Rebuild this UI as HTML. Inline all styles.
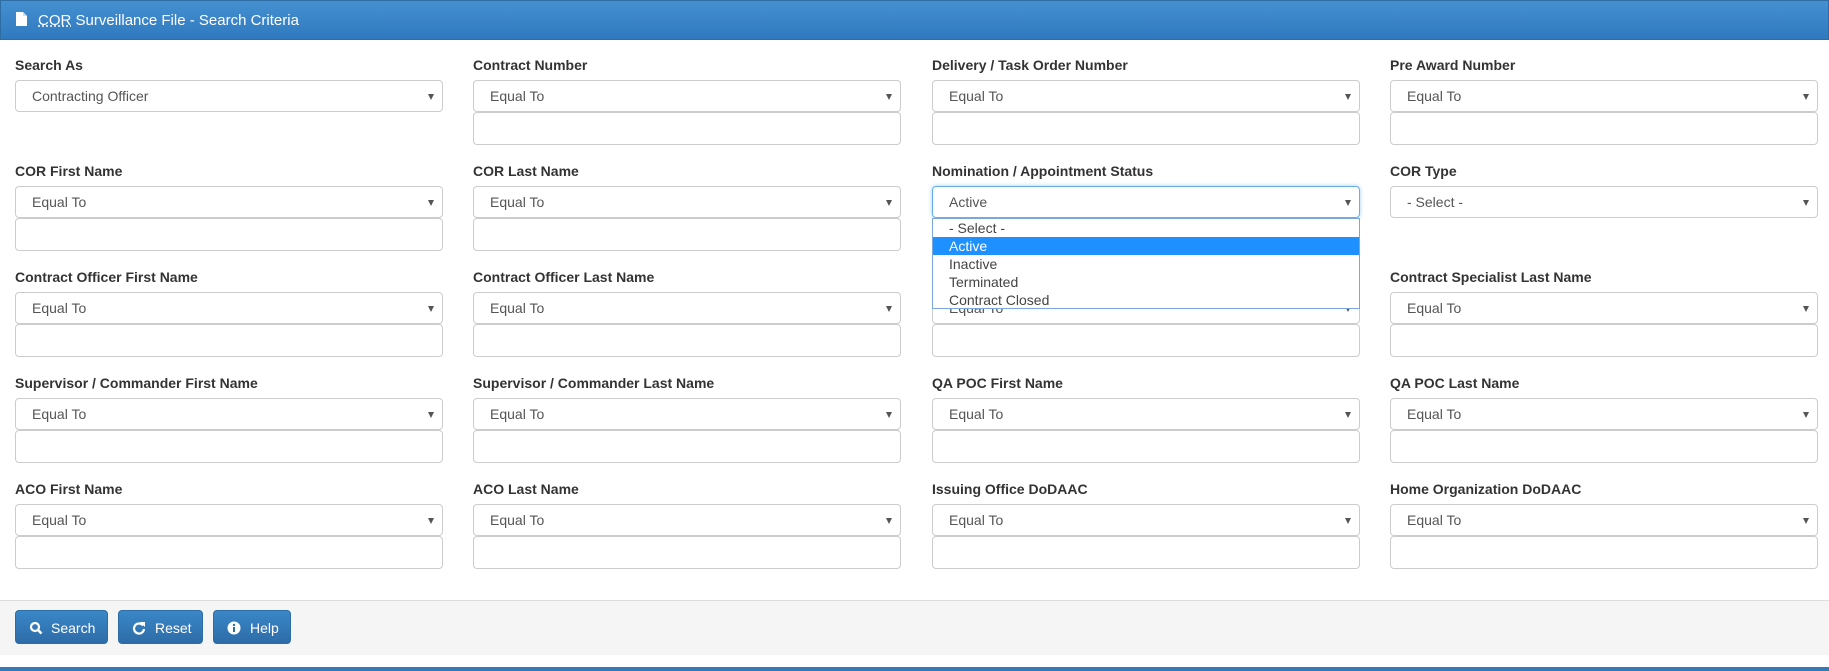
<!DOCTYPE html>
<html><head><style>
*{box-sizing:border-box}
body{margin:0;width:1829px;height:671px;background:#fff;font-family:"Liberation Sans",Arial,sans-serif;position:relative;overflow:hidden}
.hdr{position:absolute;left:0;top:0;width:1829px;height:40px;background:linear-gradient(#4490d0,#3079bf);border:1px solid #2e6da4;color:#fff;font-size:15px}
.hdr span{position:absolute;left:37px;top:11px}
.hdr u{text-decoration:underline dotted}
.lbl{position:absolute;font-weight:bold;font-size:14px;color:#333}
.sel{position:absolute;height:32px;border:1px solid #ccc;border-radius:4px;font-size:14px;color:#555;padding:7px 16px;background:#fff}
.sel:after{content:"";position:absolute;right:8px;top:13px;border-left:3.5px solid transparent;border-right:3.5px solid transparent;border-top:6px solid #555}
.inp{position:absolute;height:33px;border:1px solid #ccc;border-radius:4px;background:#fff}
.foot{position:absolute;left:0;top:600px;width:1829px;height:55px;background:#f5f5f5;border-top:1px solid #ddd}
.btn{position:absolute;top:610px;height:34px;background:linear-gradient(#3a87c8,#2d6ca8);border:1px solid #2e6da4;border-radius:4px;color:#fff;font-size:14px;padding:9px 0 0 0}
.btn svg{position:absolute;left:13px;top:10px}
.btn span{position:absolute;top:9px}
.dd{position:absolute;left:932px;top:218px;width:428px;height:91px;background:#fff;border:1px solid #7aa7e0;font-size:14px;color:#444;z-index:5}
.dd div{height:18px;line-height:18px;padding-left:16px}
.dd .on{background:#1e90ff;color:#fff}
</style></head><body>
<div class="hdr"><svg style="position:absolute;left:15px;top:11px" width="11" height="14" viewBox="0 0 11 14"><path d="M0 0H7L11 4V14H0Z" fill="#fff"/><path d="M7 0V4H11" fill="#cfe0f0"/></svg><span><u>COR</u> Surveillance File - Search Criteria</span></div>

<div class="lbl" style="left:15px;top:57px">Search As</div>
<div class="sel" style="left:15px;top:80px;width:428px">Contracting Officer</div>

<div class="lbl" style="left:473px;top:57px">Contract Number</div>
<div class="sel" style="left:473px;top:80px;width:428px">Equal To</div><div class="inp" style="left:473px;top:112px;width:428px"></div>
<div class="lbl" style="left:932px;top:57px">Delivery / Task Order Number</div>
<div class="sel" style="left:932px;top:80px;width:428px">Equal To</div><div class="inp" style="left:932px;top:112px;width:428px"></div>
<div class="lbl" style="left:1390px;top:57px">Pre Award Number</div>
<div class="sel" style="left:1390px;top:80px;width:428px">Equal To</div><div class="inp" style="left:1390px;top:112px;width:428px"></div>

<div class="lbl" style="left:15px;top:163px">COR First Name</div>
<div class="sel" style="left:15px;top:186px;width:428px">Equal To</div><div class="inp" style="left:15px;top:218px;width:428px"></div>
<div class="lbl" style="left:473px;top:163px">COR Last Name</div>
<div class="sel" style="left:473px;top:186px;width:428px">Equal To</div><div class="inp" style="left:473px;top:218px;width:428px"></div>
<div class="lbl" style="left:932px;top:163px">Nomination / Appointment Status</div>
<div class="sel" style="left:932px;top:186px;width:428px;border-color:#66afe9;box-shadow:0 0 4px rgba(102,175,233,.6)">Active</div>
<div class="lbl" style="left:1390px;top:163px">COR Type</div>
<div class="sel" style="left:1390px;top:186px;width:428px">- Select -</div>

<div class="lbl" style="left:15px;top:269px">Contract Officer First Name</div>
<div class="sel" style="left:15px;top:292px;width:428px">Equal To</div><div class="inp" style="left:15px;top:324px;width:428px"></div>
<div class="lbl" style="left:473px;top:269px">Contract Officer Last Name</div>
<div class="sel" style="left:473px;top:292px;width:428px">Equal To</div><div class="inp" style="left:473px;top:324px;width:428px"></div>
<div class="sel" style="left:932px;top:292px;width:428px">Equal To</div><div class="inp" style="left:932px;top:324px;width:428px"></div>
<div class="lbl" style="left:1390px;top:269px">Contract Specialist Last Name</div>
<div class="sel" style="left:1390px;top:292px;width:428px">Equal To</div><div class="inp" style="left:1390px;top:324px;width:428px"></div>

<div class="lbl" style="left:15px;top:375px">Supervisor / Commander First Name</div>
<div class="sel" style="left:15px;top:398px;width:428px">Equal To</div><div class="inp" style="left:15px;top:430px;width:428px"></div>
<div class="lbl" style="left:473px;top:375px">Supervisor / Commander Last Name</div>
<div class="sel" style="left:473px;top:398px;width:428px">Equal To</div><div class="inp" style="left:473px;top:430px;width:428px"></div>
<div class="lbl" style="left:932px;top:375px">QA POC First Name</div>
<div class="sel" style="left:932px;top:398px;width:428px">Equal To</div><div class="inp" style="left:932px;top:430px;width:428px"></div>
<div class="lbl" style="left:1390px;top:375px">QA POC Last Name</div>
<div class="sel" style="left:1390px;top:398px;width:428px">Equal To</div><div class="inp" style="left:1390px;top:430px;width:428px"></div>

<div class="lbl" style="left:15px;top:481px">ACO First Name</div>
<div class="sel" style="left:15px;top:504px;width:428px">Equal To</div><div class="inp" style="left:15px;top:536px;width:428px"></div>
<div class="lbl" style="left:473px;top:481px">ACO Last Name</div>
<div class="sel" style="left:473px;top:504px;width:428px">Equal To</div><div class="inp" style="left:473px;top:536px;width:428px"></div>
<div class="lbl" style="left:932px;top:481px">Issuing Office DoDAAC</div>
<div class="sel" style="left:932px;top:504px;width:428px">Equal To</div><div class="inp" style="left:932px;top:536px;width:428px"></div>
<div class="lbl" style="left:1390px;top:481px">Home Organization DoDAAC</div>
<div class="sel" style="left:1390px;top:504px;width:428px">Equal To</div><div class="inp" style="left:1390px;top:536px;width:428px"></div>

<div class="dd"><div>- Select -</div><div class="on">Active</div><div>Inactive</div><div>Terminated</div><div>Contract Closed</div></div>

<div class="foot"></div>
<div class="btn" style="left:15px;width:93px"><svg width="14" height="14" viewBox="0 0 14 14"><circle cx="6" cy="6" r="4" fill="none" stroke="#fff" stroke-width="2.2"/><path d="M9 9L12.5 12.5" stroke="#fff" stroke-width="2.6"/></svg><span style="left:35px">Search</span></div>
<div class="btn" style="left:118px;width:85px"><svg width="14" height="14" viewBox="0 0 14 14"><path d="M11 4.5A5 5 0 1 0 12 8" fill="none" stroke="#fff" stroke-width="2.2"/><path d="M8 1H13V6Z" fill="#fff"/></svg><span style="left:36px">Reset</span></div>
<div class="btn" style="left:213px;width:78px"><svg width="14" height="14" viewBox="0 0 14 14"><circle cx="7" cy="7" r="6.5" fill="#fff"/><rect x="6" y="6" width="2" height="5" fill="#2d6ca8"/><circle cx="7" cy="4" r="1.2" fill="#2d6ca8"/></svg><span style="left:36px">Help</span></div>
<div style="position:absolute;left:0;top:667px;width:1829px;height:4px;background:#337ab7"></div>
</body></html>
